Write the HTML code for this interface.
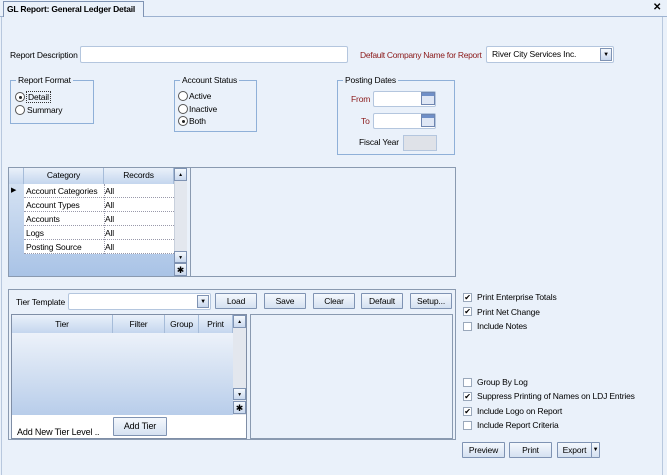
<!DOCTYPE html>
<html><head><style>
*{box-sizing:border-box;margin:0;padding:0}
body{width:667px;height:475px;background:#eaf1fa;font-family:"Liberation Sans",sans-serif;font-size:8.5px;letter-spacing:-0.15px;color:#000;position:relative;overflow:hidden;white-space:nowrap}
.a{position:absolute}
.in{position:absolute;background:#fff;border:1px solid #b4c6de;border-radius:2px}
.gb{position:absolute;border:1px solid #8fb0d8}
.gt{position:absolute;background:#eaf1fa;padding:0 2px;top:-6px;left:5px;white-space:nowrap}
.rd{position:absolute;width:10px;height:10px;border:1px solid #555;border-radius:50%;background:#fff}
.rd.on::after{content:"";position:absolute;left:2.5px;top:2.5px;width:3px;height:3px;border-radius:50%;background:#222}
.btn{position:absolute;border:1px solid #7f93b3;background:linear-gradient(#f4f8fd,#d5e1f1);text-align:center;line-height:14px;border-radius:1px}
.cb{position:absolute;width:9px;height:9px;border:1px solid #9aa8bb;background:#fff;font-size:8px;line-height:7px;text-align:center}
.dd{position:absolute;width:12px;height:13px;border:1px solid #7f93b3;background:linear-gradient(#f4f8fd,#c9d8ee);font-size:6px;text-align:center;line-height:12px}
.cal{position:absolute;width:14px;height:13px;background:linear-gradient(#6f8fc7 0 3px,#dfe7f5 3px);border:1px solid #6f86b0}
.hd{position:absolute;background:linear-gradient(#eaf1fa,#c4d6ee);border-right:1px solid #a6bcd9;text-align:center;line-height:15px}
.row{position:absolute;left:24px;width:150px;height:14px;background:#fff;border-bottom:1px dotted #99a;line-height:14px}
.red{color:#8b1a1a}
</style></head><body>
<div class="a" style="left:0;top:16px;width:667px;height:1px;background:#9db2d0"></div>
<div class="a" style="left:3px;top:1px;width:141px;height:16px;background:#eaf1fa;border:1px solid #7f93b3;border-bottom:none;font-weight:bold;font-size:8.5px;letter-spacing:-0.2px;line-height:14px;padding-left:3px">GL Report: General Ledger Detail</div>
<div class="a" style="left:653px;top:2px;font-weight:bold;font-size:10px">✕</div>
<div class="a" style="left:1px;top:17px;width:1px;height:458px;background:#b8c8de"></div>
<div class="a" style="left:662px;top:17px;width:1px;height:458px;background:#b8c8de"></div>

<div class="a" style="left:10px;top:50px">Report Description</div>
<div class="in" style="left:80px;top:46px;width:268px;height:17px"></div>
<div class="a red" style="left:360px;top:50px;letter-spacing:-0.3px">Default Company Name for Report</div>
<div class="in" style="left:486px;top:46px;width:128px;height:17px;padding:2px 5px">River City Services Inc.</div>
<div class="dd" style="left:600px;top:48px">▼</div>

<div class="gb" style="left:10px;top:80px;width:84px;height:44px"><div class="gt">Report Format</div></div>
<div class="rd on" style="left:15px;top:92px"></div><div class="a" style="left:26px;top:91px;border:1px dotted #333;padding:0 1px">Detail</div>
<div class="rd" style="left:15px;top:105px"></div><div class="a" style="left:27px;top:105px">Summary</div>

<div class="gb" style="left:174px;top:80px;width:83px;height:52px"><div class="gt">Account Status</div></div>
<div class="rd" style="left:178px;top:91px"></div><div class="a" style="left:189px;top:91px">Active</div>
<div class="rd" style="left:178px;top:104px"></div><div class="a" style="left:189px;top:104px">Inactive</div>
<div class="rd on" style="left:178px;top:116px"></div><div class="a" style="left:189px;top:116px">Both</div>

<div class="gb" style="left:337px;top:80px;width:118px;height:75px"><div class="gt">Posting Dates</div></div>
<div class="a red" style="left:351px;top:94px">From</div>
<div class="in" style="left:373px;top:91px;width:63px;height:16px"></div><div class="cal" style="left:421px;top:92px"></div>
<div class="a red" style="left:361px;top:116px">To</div>
<div class="in" style="left:373px;top:113px;width:63px;height:16px"></div><div class="cal" style="left:421px;top:114px"></div>
<div class="a" style="left:359px;top:137px">Fiscal Year</div>
<div class="a" style="left:403px;top:135px;width:34px;height:16px;background:#dfe2e8;border:1px solid #b4c6de"></div>

<div class="a" style="left:8px;top:167px;width:448px;height:110px;border:1px solid #8a9ab0"></div>
<div class="a" style="left:9px;top:168px;width:178px;height:108px;background:linear-gradient(#dce7f5,#a9c3e6)"></div>
<div class="a" style="left:190px;top:168px;width:1px;height:108px;background:#8a9ab0"></div>
<div class="hd" style="left:9px;top:168px;width:15px;height:16px"></div>
<div class="hd" style="left:24px;top:168px;width:80px;height:16px">Category</div>
<div class="hd" style="left:104px;top:168px;width:70px;height:16px">Records</div>
<div class="a" style="left:174px;top:168px;width:13px;height:108px;background:#e3e7ee;border-left:1px solid #c8d0dc"></div>
<div class="dd" style="left:174px;top:168px;width:13px;height:13px;font-size:5px">▲</div>
<div class="dd" style="left:174px;top:251px;width:13px;height:12px;font-size:5px">▼</div>
<div class="dd" style="left:174px;top:263px;width:13px;height:13px;font-size:9px;line-height:12px">✱</div>
<div class="a" style="left:11px;top:186px;font-size:7px">▶</div>
<div class="row" style="top:184px"><span style="padding-left:2px">Account Categories</span><span class="a" style="left:81px">All</span></div>
<div class="row" style="top:198px"><span style="padding-left:2px">Account Types</span><span class="a" style="left:81px">All</span></div>
<div class="row" style="top:212px"><span style="padding-left:2px">Accounts</span><span class="a" style="left:81px">All</span></div>
<div class="row" style="top:226px"><span style="padding-left:2px">Logs</span><span class="a" style="left:81px">All</span></div>
<div class="row" style="top:240px"><span style="padding-left:2px">Posting Source</span><span class="a" style="left:81px">All</span></div>
<div class="a" style="left:104px;top:184px;width:1px;height:70px;border-left:1px dotted #99a"></div>

<div class="a" style="left:8px;top:289px;width:448px;height:151px;border:1px solid #8a9ab0"></div>
<div class="a" style="left:16px;top:297px">Tier Template</div>
<div class="in" style="left:68px;top:293px;width:143px;height:17px"></div>
<div class="dd" style="left:197px;top:295px">▼</div>
<div class="btn" style="left:215px;top:293px;width:42px;height:16px">Load</div>
<div class="btn" style="left:264px;top:293px;width:42px;height:16px">Save</div>
<div class="btn" style="left:313px;top:293px;width:42px;height:16px">Clear</div>
<div class="btn" style="left:361px;top:293px;width:42px;height:16px">Default</div>
<div class="btn" style="left:410px;top:293px;width:42px;height:16px">Setup...</div>
<div class="a" style="left:11px;top:314px;width:236px;height:125px;border:1px solid #7f8ea6;background:#fff"></div>
<div class="a" style="left:12px;top:315px;width:221px;height:100px;background:linear-gradient(#f8fafd,#b8cdea)"></div>
<div class="hd" style="left:12px;top:315px;width:101px;height:18px;line-height:18px">Tier</div>
<div class="hd" style="left:113px;top:315px;width:52px;height:18px;line-height:18px">Filter</div>
<div class="hd" style="left:165px;top:315px;width:34px;height:18px;line-height:18px">Group</div>
<div class="hd" style="left:199px;top:315px;width:34px;height:18px;line-height:18px">Print</div>
<div class="a" style="left:233px;top:315px;width:13px;height:100px;background:#e3e7ee"></div>
<div class="dd" style="left:233px;top:315px;width:13px;height:13px;font-size:5px">▲</div>
<div class="dd" style="left:233px;top:388px;width:13px;height:12px;font-size:5px">▼</div>
<div class="dd" style="left:233px;top:401px;width:13px;height:13px;font-size:9px;line-height:12px">✱</div>
<div class="a" style="left:17px;top:427px;font-size:9px">Add New Tier Level ..</div>
<div class="btn" style="left:113px;top:417px;width:54px;height:19px;line-height:17px;font-size:9px">Add Tier</div>
<div class="a" style="left:250px;top:314px;width:203px;height:125px;border:1px solid #8a9ab0"></div>

<div class="cb" style="left:463px;top:293px">✔</div><div class="a" style="left:477px;top:292px">Print Enterprise Totals</div>
<div class="cb" style="left:463px;top:307px">✔</div><div class="a" style="left:477px;top:307px">Print Net Change</div>
<div class="cb" style="left:463px;top:322px"></div><div class="a" style="left:477px;top:321px">Include Notes</div>
<div class="cb" style="left:463px;top:378px"></div><div class="a" style="left:477px;top:377px">Group By Log</div>
<div class="cb" style="left:463px;top:392px">✔</div><div class="a" style="left:477px;top:391px">Suppress Printing of Names on LDJ Entries</div>
<div class="cb" style="left:463px;top:407px">✔</div><div class="a" style="left:477px;top:406px">Include Logo on Report</div>
<div class="cb" style="left:463px;top:421px"></div><div class="a" style="left:477px;top:420px">Include Report Criteria</div>
<div class="btn" style="left:462px;top:442px;width:43px;height:16px">Preview</div>
<div class="btn" style="left:509px;top:442px;width:43px;height:16px">Print</div>
<div class="btn" style="left:557px;top:442px;width:35px;height:16px">Export</div>
<div class="btn" style="left:591px;top:442px;width:9px;height:16px;font-size:6px">▼</div>
</body></html>
